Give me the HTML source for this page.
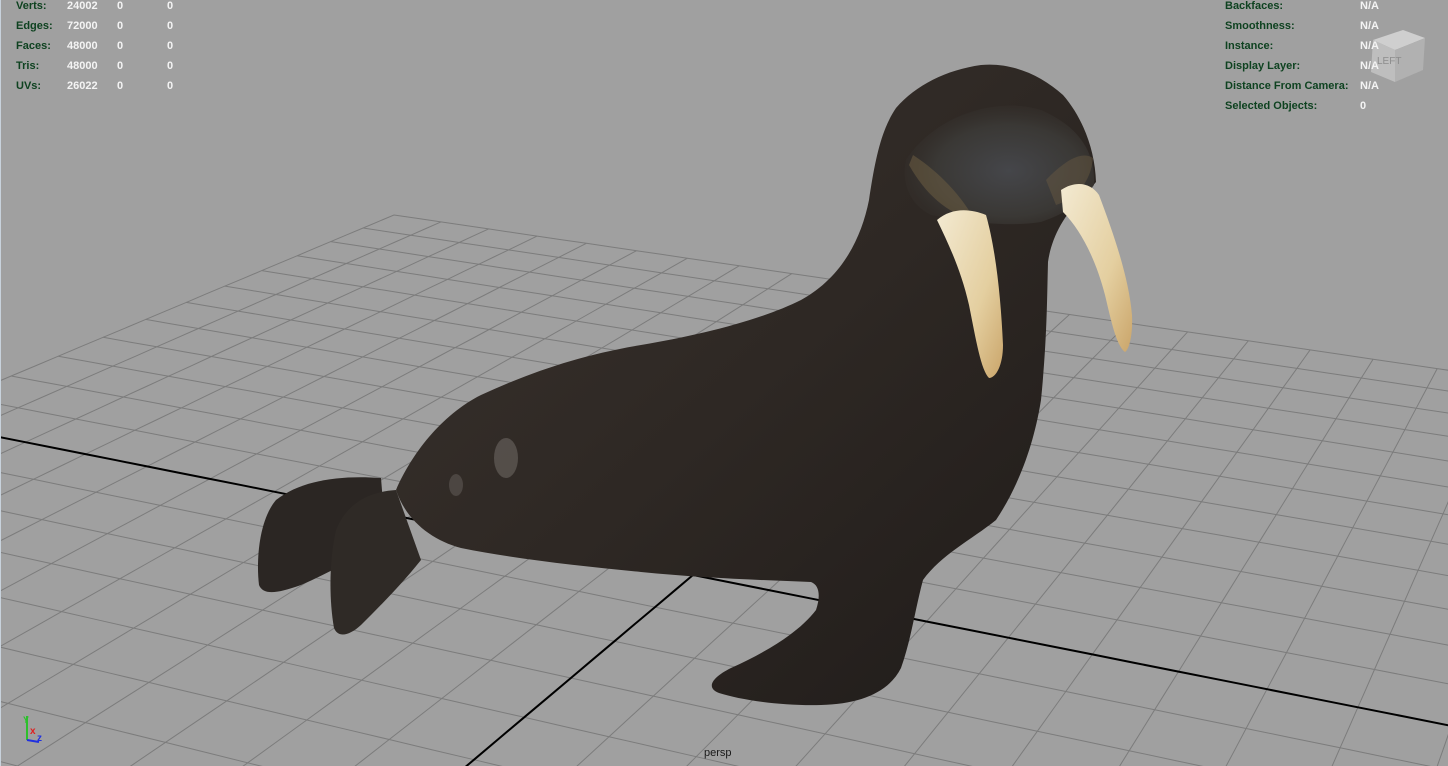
<!DOCTYPE html>
<html><head><meta charset="utf-8"><style>
html,body{margin:0;padding:0;width:1448px;height:766px;overflow:hidden;background:#a0a0a0}
#v{position:absolute;left:0;top:0;width:1448px;height:766px;overflow:hidden;background:#a0a0a0;border-left:1px solid #c8d2dc;box-sizing:border-box}
.h{position:absolute;font:bold 11px "Liberation Sans",sans-serif;color:#0e4220;white-space:nowrap}
.w{color:#f4f4f4}
</style></head><body><div id="v">
<svg id="g" width="1448" height="766" style="position:absolute;left:0;top:0">
<defs>
<linearGradient id="bd" x1="0" y1="0" x2="1" y2="1">
<stop offset="0" stop-color="#3a332e"/><stop offset="0.5" stop-color="#2e2824"/><stop offset="1" stop-color="#1f1b19"/></linearGradient>
<linearGradient id="tk" x1="0" y1="0" x2="1" y2="1">
<stop offset="0" stop-color="#f3ead2"/><stop offset="0.6" stop-color="#e4cfa0"/><stop offset="1" stop-color="#caa56a"/></linearGradient>
<radialGradient id="fc" cx="0.55" cy="0.55" r="0.55">
<stop offset="0" stop-color="#45464a"/><stop offset="0.7" stop-color="#3a3835"/><stop offset="1" stop-color="#332e2a" stop-opacity="0.6"/></radialGradient>
</defs>
<g id="grid" stroke="#7c7c7c" stroke-width="1" fill="none"></g>
<g id="axes" stroke="#000" stroke-width="2" fill="none"></g>
<path d="M380,478 C340,475 300,480 275,500 C258,520 255,560 258,585 C262,595 275,594 300,585 C330,572 360,555 385,540 Z" fill="#2b2623"/>
<path d="M395,490 C365,492 345,505 335,530 C328,560 328,600 333,628 C337,638 348,636 360,625 C380,605 400,585 420,560 Z" fill="#2f2a26"/>
<path d="M980,65 C1010,62 1040,75 1062,95 C1082,118 1094,150 1095,182 L1080,200 C1062,215 1050,240 1047,262 C1046,300 1046,340 1040,400 C1032,450 1015,490 995,520 C970,540 940,555 922,580 C914,610 910,640 900,668 C888,692 860,704 820,705 C780,706 740,700 718,693 C705,688 710,678 730,668 C770,650 800,630 815,610 C820,595 818,585 810,582 C760,580 700,578 640,572 C580,566 520,560 460,548 C430,540 405,520 395,490 C410,455 440,415 480,395 C530,372 580,355 640,345 C700,335 760,320 800,300 C840,278 860,240 868,200 C874,160 880,130 895,108 C915,85 945,70 980,65 Z" fill="url(#bd)"/>
<ellipse cx="505" cy="458" rx="12" ry="20" fill="#8a8580" opacity="0.4"/>
<ellipse cx="455" cy="485" rx="7" ry="11" fill="#8a8580" opacity="0.3"/>
<path d="M905,160 C930,120 990,95 1040,110 C1075,125 1095,150 1093,185 C1080,205 1060,215 1040,222 C1000,228 960,220 930,215 C910,205 900,185 905,160 Z" fill="url(#fc)"/>
<path d="M908,165 C925,195 945,212 975,222 C960,195 938,172 912,155 Z" fill="#6b5c42" opacity="0.55"/>
<path d="M1045,180 C1062,162 1080,150 1092,158 C1090,182 1075,198 1055,205 Z" fill="#6b5c42" opacity="0.45"/>
<path d="M936,220 C950,208 968,208 985,215 C995,250 1000,300 1002,345 C1002,365 995,378 988,378 C980,370 975,340 968,305 C960,270 948,245 936,220 Z" fill="url(#tk)"/>
<path d="M1060,190 C1075,180 1090,183 1098,195 C1115,240 1128,280 1131,315 C1132,335 1128,350 1124,352 C1115,345 1110,320 1104,295 C1095,260 1080,230 1062,212 Z" fill="url(#tk)"/>
<g opacity="0.85">
<path d="M1372,40 L1402,30 L1424,38 L1394,50 Z" fill="#d8d8d8"/>
<path d="M1372,40 L1394,50 L1394,82 L1370,72 Z" fill="#c4c4c4"/>
<path d="M1394,50 L1424,38 L1422,70 L1394,82 Z" fill="#b4b4b4"/>
<text x="1376" y="64" font-family="Liberation Sans,sans-serif" font-size="10" fill="#8a8a8a">LEFT</text>
</g>
<line x1="26" y1="716" x2="26" y2="740" stroke="#2cc02c" stroke-width="2"/>
<line x1="26" y1="740" x2="38" y2="742" stroke="#2030e0" stroke-width="2"/>
<text x="22" y="723" font-family="Liberation Sans,sans-serif" font-weight="bold" font-size="9" fill="#2cc02c">Y</text>
<text x="29" y="734" font-family="Liberation Sans,sans-serif" font-weight="bold" font-size="10" fill="#e02020">x</text>
<text x="36" y="741" font-family="Liberation Sans,sans-serif" font-weight="bold" font-size="10" fill="#2030e0">z</text>
</svg>
<div class="h" style="left:15px;top:0px">Verts:</div><div class="h w" style="left:66px;top:0px">24002</div><div class="h w" style="left:116px;top:0px">0</div><div class="h w" style="left:166px;top:0px">0</div>
<div class="h" style="left:15px;top:20px">Edges:</div><div class="h w" style="left:66px;top:20px">72000</div><div class="h w" style="left:116px;top:20px">0</div><div class="h w" style="left:166px;top:20px">0</div>
<div class="h" style="left:15px;top:40px">Faces:</div><div class="h w" style="left:66px;top:40px">48000</div><div class="h w" style="left:116px;top:40px">0</div><div class="h w" style="left:166px;top:40px">0</div>
<div class="h" style="left:15px;top:60px">Tris:</div><div class="h w" style="left:66px;top:60px">48000</div><div class="h w" style="left:116px;top:60px">0</div><div class="h w" style="left:166px;top:60px">0</div>
<div class="h" style="left:15px;top:80px">UVs:</div><div class="h w" style="left:66px;top:80px">26022</div><div class="h w" style="left:116px;top:80px">0</div><div class="h w" style="left:166px;top:80px">0</div>
<div class="h" style="left:1224px;top:0px">Backfaces:</div><div class="h w" style="left:1359px;top:0px">N/A</div>
<div class="h" style="left:1224px;top:20px">Smoothness:</div><div class="h w" style="left:1359px;top:20px">N/A</div>
<div class="h" style="left:1224px;top:40px">Instance:</div><div class="h w" style="left:1359px;top:40px">N/A</div>
<div class="h" style="left:1224px;top:60px">Display Layer:</div><div class="h w" style="left:1359px;top:60px">N/A</div>
<div class="h" style="left:1224px;top:80px">Distance From Camera:</div><div class="h w" style="left:1359px;top:80px">N/A</div>
<div class="h" style="left:1224px;top:100px">Selected Objects:</div><div class="h w" style="left:1359px;top:100px">0</div>
<div class="h" style="left:703px;top:747px;color:#1a1a1a;font-weight:normal">persp</div>
</div>
<script>
(function(){
var src=[[0,0],[-12,12],[-12,0],[0,12]],dst=[[692,575],[393,215],[-92,419],[1011,306]];
var A=[],b=[];
for(var i=0;i<4;i++){var x=src[i][0],y=src[i][1],X=dst[i][0],Y=dst[i][1];
A.push([x,y,1,0,0,0,-X*x,-X*y]);b.push(X);
A.push([0,0,0,x,y,1,-Y*x,-Y*y]);b.push(Y);}
var n=8;for(var c=0;c<n;c++){var p=c;for(var r=c+1;r<n;r++)if(Math.abs(A[r][c])>Math.abs(A[p][c]))p=r;
var t=A[c];A[c]=A[p];A[p]=t;t=b[c];b[c]=b[p];b[p]=t;
for(var r=0;r<n;r++){if(r==c)continue;var f=A[r][c]/A[c][c];for(var k=c;k<n;k++)A[r][k]-=f*A[c][k];b[r]-=f*b[c];}}
var h=[];for(var i=0;i<n;i++)h.push(b[i]/A[i][i]);h.push(1);
function P(u,v){var w=h[6]*u+h[7]*v+1;if(w<=0.02)return null;return[(h[0]*u+h[1]*v+h[2])/w,(h[3]*u+h[4]*v+h[5])/w];}
var ns="http://www.w3.org/2000/svg",G=document.getElementById('grid'),AX=document.getElementById('axes');
function line(g,f){var pts=[];for(var s=-12;s<=12.001;s+=0.5){var q=f(s);if(q)pts.push(q[0].toFixed(1)+','+q[1].toFixed(1));}
if(pts.length>1){var e=document.createElementNS(ns,'polyline');e.setAttribute('points',pts.join(' '));g.appendChild(e);}}
for(var i=-12;i<=12;i++){(function(i){
line(i==0?AX:G,function(s){return P(i,s);});
line(i==0?AX:G,function(s){return P(s,i);});})(i);}
})();
</script>
</body></html>
